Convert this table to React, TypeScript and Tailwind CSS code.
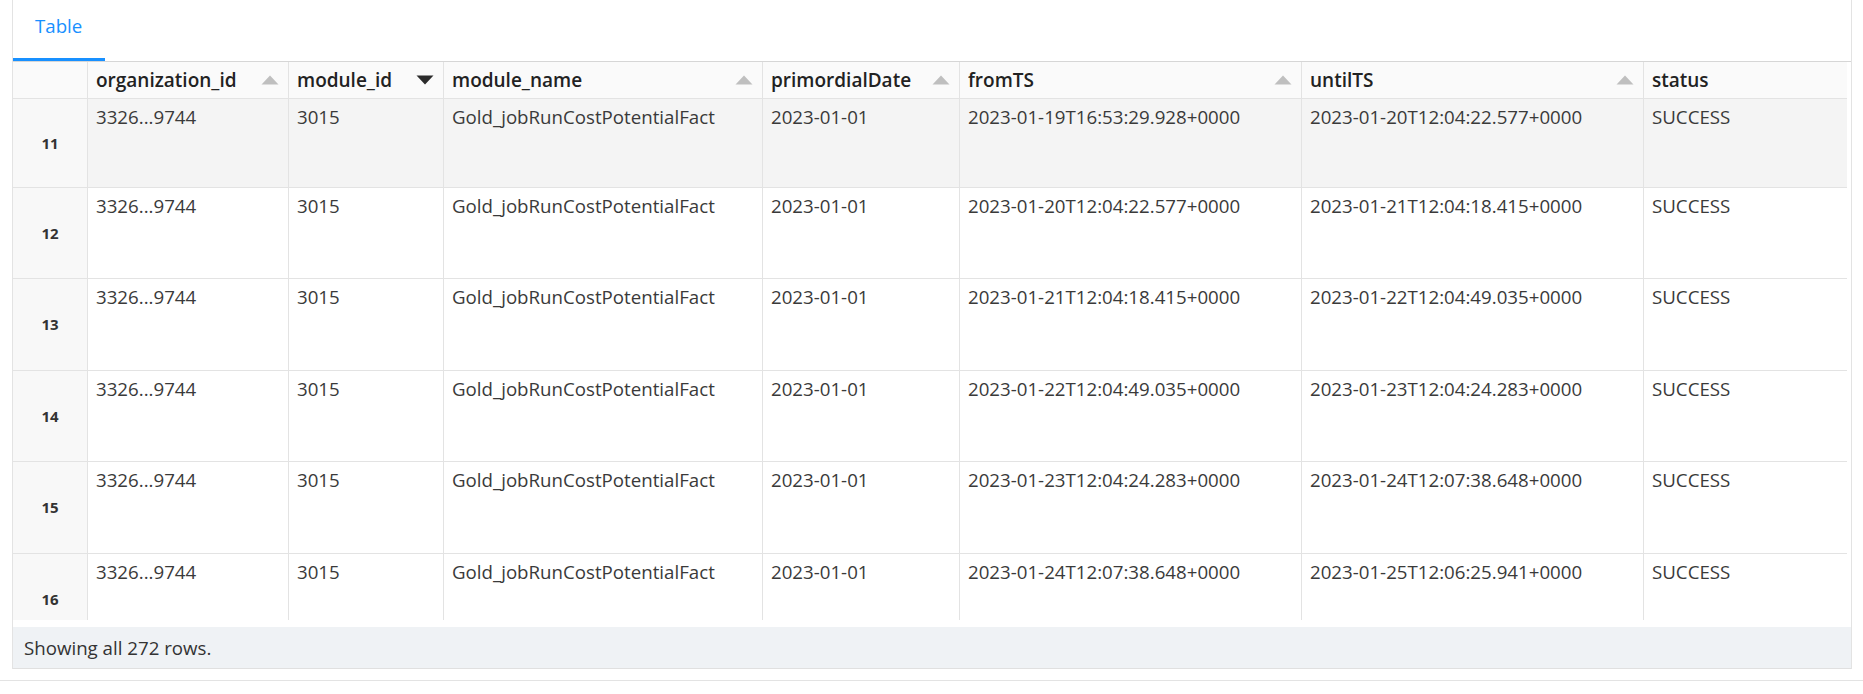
import type { ReactNode } from 'react';

type SortDir = 'up' | 'down' | null;

interface Column {
  key: string;
  label: string;
  sort: SortDir;
}

const columns: Column[] = [
  { key: 'org', label: 'organization_id', sort: 'up' },
  { key: 'moduleId', label: 'module_id', sort: 'down' },
  { key: 'moduleName', label: 'module_name', sort: 'up' },
  { key: 'primordial', label: 'primordialDate', sort: 'up' },
  { key: 'from', label: 'fromTS', sort: 'up' },
  { key: 'until', label: 'untilTS', sort: 'up' },
  { key: 'status', label: 'status', sort: null },
];

const stamps = [
  '2023-01-19T16:53:29.928+0000',
  '2023-01-20T12:04:22.577+0000',
  '2023-01-21T12:04:18.415+0000',
  '2023-01-22T12:04:49.035+0000',
  '2023-01-23T12:04:24.283+0000',
  '2023-01-24T12:07:38.648+0000',
  '2023-01-25T12:06:25.941+0000',
];

// row heights as they land in the grid (incl. bottom border)
const rowHeights = ['h-[89px]', 'h-[91px]', 'h-[92px]', 'h-[91px]', 'h-[92px]', 'h-[92px]'];

const rows = rowHeights.map((h, i) => ({
  n: 11 + i,
  h,
  hover: i === 0,
  cells: [
    '3326...9744',
    '3015',
    'Gold_jobRunCostPotentialFact',
    '2023-01-01',
    stamps[i],
    stamps[i + 1],
    'SUCCESS',
  ],
}));

const gridCols =
  'grid grid-cols-[75px_201px_155px_319px_197px_342px_342px_203px]';

function SortIcon({ dir }: { dir: SortDir }) {
  if (!dir) return null;
  return (
    <svg width="18" height="10" viewBox="0 0 18 10" className="shrink-0">
      {dir === 'up' ? (
        <path d="M9 0.5 L17.5 9.5 L0.5 9.5 Z" fill="#bfbfbf" />
      ) : (
        <path d="M0.5 0.5 L17.5 0.5 L9 9.5 Z" fill="#2b2b2b" />
      )}
    </svg>
  );
}

function HeaderCell({ children, sort, last }: { children?: ReactNode; sort?: SortDir; last?: boolean }) {
  return (
    <div
      className={`flex items-center justify-between pl-[8px] pr-[9px] h-full border-[#e3e3e3] ${
        last ? '' : 'border-r'
      }`}
    >
      <span className="text-[19px] font-semibold text-[#222] truncate">{children}</span>
      {sort ? <SortIcon dir={sort} /> : null}
    </div>
  );
}

export default function App() {
  return (
    <div
      className="w-[1863px] h-[694px] bg-white text-[18.7px] leading-[25px] text-[#3a3a3a]"
      style={{ fontFamily: '"Open Sans", "Noto Sans", sans-serif' }}
    >
      <div className="ml-[12px] w-[1840px] h-[669px] border-x border-[#e3e3e3] flex flex-col">
        {/* tabs */}
        <div className="h-[62px] shrink-0 flex border-b border-[#d6d6d6]">
          <div className="w-[92px] h-full pl-[22px] pt-[13px] border-b-[3px] border-[#1890ff] text-[#1890ff]">
            Table
          </div>
        </div>

        {/* table viewport */}
        <div className="h-[558px] w-[1834px] overflow-hidden shrink-0">
          <div className={`${gridCols} h-[37px] bg-[#fafafa] border-b border-[#e3e3e3]`}>
            <HeaderCell />
            {columns.map((c, i) => (
              <HeaderCell key={c.key} sort={c.sort} last={i === columns.length - 1}>
                {c.label}
              </HeaderCell>
            ))}
          </div>

          {rows.map((r) => (
            <div
              key={r.n}
              className={`${gridCols} ${r.h} shrink-0 border-b border-[#e3e3e3] ${
                r.hover ? 'bg-[#f4f4f4]' : 'bg-white'
              }`}
            >
              <div className="flex items-center justify-center bg-[#f8f8f8] border-r border-[#e3e3e3] text-[15px] font-bold text-[#333]">
                {r.n}
              </div>
              {r.cells.map((v, i) => (
                <div
                  key={i}
                  className={`pl-[8px] pt-[5px] whitespace-nowrap overflow-hidden ${
                    i === r.cells.length - 1 ? '' : 'border-r border-[#e3e3e3]'
                  }`}
                >
                  {v}
                </div>
              ))}
            </div>
          ))}
        </div>

        {/* footer */}
        <div className="mt-[7px] h-[42px] flex items-center pl-[11px] bg-[#eff2f5] border-b border-[#e0e0e0] text-[#333]">
          Showing all 272 rows.
        </div>
      </div>
      <div className="mt-[11px] h-px w-full bg-[#e3e3e3]" />
    </div>
  );
}
